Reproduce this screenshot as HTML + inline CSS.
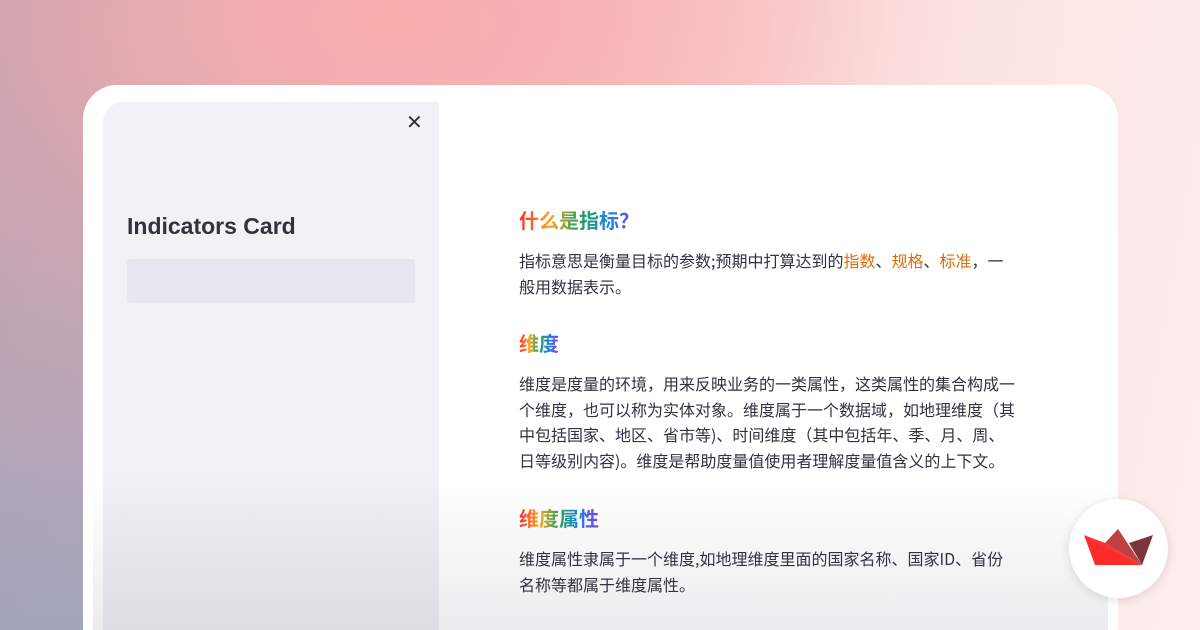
<!DOCTYPE html>
<html><head><meta charset="utf-8"><style>
*{margin:0;padding:0;box-sizing:border-box}
html,body{width:1200px;height:630px;overflow:hidden}
body{position:relative;font-family:"Liberation Sans","Noto Sans CJK SC",sans-serif;
background:radial-gradient(ellipse 500px 260px at 400px 20px,#fbaeae 0%,rgba(251,174,174,0) 100%),linear-gradient(100deg,#c9a4b0 0%,#d8aab2 25%,#f6c4c4 50%,#fde4e4 75%,#fdeeee 100%);}
.bgl{position:absolute;left:0;top:0;width:600px;height:630px;background:linear-gradient(180deg,rgba(160,168,188,0) 30%,rgba(150,165,190,.8) 100%);}
.frame{position:absolute;left:83px;top:85px;width:1035px;height:545px;background:#fff;border-radius:34px 34px 0 0;}
.inner{position:absolute;left:93px;top:97px;width:1015px;height:533px;background:linear-gradient(180deg,#fff 0%,#fff 72%,#ececee 100%);border-radius:24px 24px 0 0;}
.side{position:absolute;left:103px;top:102px;width:336px;height:528px;border-radius:20px 0 0 0;background:linear-gradient(180deg,#f0f2f6 0%,#f0f2f6 70%,#dcdde2 100%);}
.close{position:absolute;left:406px;top:110px;font-size:20px;color:#31333f}
.title{position:absolute;left:127px;top:213px;font-size:23px;font-weight:bold;color:#31333f}
.box{position:absolute;left:127px;top:259px;width:288px;height:44px;background:#e5e8f0;border-radius:3px}
.content{position:absolute;left:519px;top:0;width:500px;height:630px;color:#31333f;font-family:"Noto Sans CJK SC","Liberation Sans",sans-serif}
h2{position:absolute;left:0;font-size:20px;font-weight:bold;white-space:nowrap;background:linear-gradient(90deg,#ff2b2b,#ffa421,#21a354,#1c83e1,#803df5);-webkit-background-clip:text;background-clip:text;color:transparent;line-height:26px}
p{position:absolute;left:0;width:500px;font-size:16px;line-height:25.5px}
.o{color:#e06c0a}
.logo{position:absolute;left:1069px;top:499px;width:99px;height:99px;border-radius:50%;background:#fff;box-shadow:0 2px 10px rgba(0,0,0,.12)}
</style></head><body>
<div class="bgl"></div>
<div class="frame"></div>
<div class="inner"></div>
<div class="side"></div>
<div class="close">✕</div>
<div class="title">Indicators Card</div>
<div class="box"></div>
<div class="content">
<h2 style="top:207px;width:120px">什么是指标？</h2>
<p style="top:248px">指标意思是衡量目标的参数;预期中打算达到的<span class="o">指数</span>、<span class="o">规格</span>、<span class="o">标准</span>，一般用数据表示。</p>
<h2 style="top:330px;width:40px">维度</h2>
<p style="top:371px">维度是度量的环境，用来反映业务的一类属性，这类属性的集合构成一个维度，也可以称为实体对象。维度属于一个数据域，如地理维度（其中包括国家、地区、省市等)、时间维度（其中包括年、季、月、周、日等级别内容)。维度是帮助度量值使用者理解度量值含义的上下文。</p>
<h2 style="top:505px;width:80px">维度属性</h2>
<p style="top:546px">维度属性隶属于一个维度,如地理维度里面的国家名称、国家ID、省份名称等都属于维度属性。</p>
</div>
<div class="logo"><svg width="99" height="99" viewBox="0 0 99 99">
<polygon points="49,30 36,44 73,66" fill="#bd4043"/>
<polygon points="60,44 84,36 73,66" fill="#7d353b"/>
<polygon points="15,36 73,66 26,66" fill="#ff2b2b"/>
<polygon points="15,36 36,44 73,66" fill="#ff2b2b"/>
</svg></div>
</body></html>
